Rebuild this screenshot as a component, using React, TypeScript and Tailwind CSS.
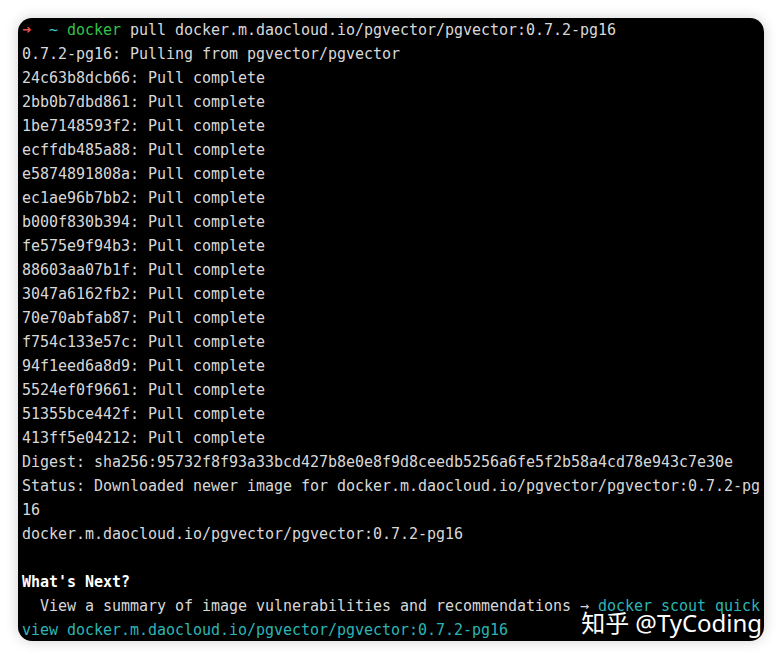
const layers = [
  ['24c63b8dcb66'],
  ['2bb0b7dbd861'],
  ['1be7148593f2'],
  ['ecffdb485a88'],
  ['e5874891808a'],
  ['ec1ae96b7bb2'],
  ['b000f830b394'],
  ['fe575e9f94b3'],
  ['88603aa07b1f'],
  ['3047a6162fb2'],
  ['70e70abfab87'],
  ['f754c133e57c'],
  ['94f1eed6a8d9'],
  ['5524ef0f9661'],
  ['51355bce442f'],
  ['413ff5e04212'],
];

const Line = ({ children, className = '' }: { children?: React.ReactNode; className?: string }) => (
  <div className={`h-6 leading-6 whitespace-pre ${className}`}>{children}</div>
);

export default function App() {
  return (
    <div className="w-[782px] h-[660px] bg-white pt-[18px] pl-[18px]">
      <div className="relative w-[746px] h-[623px] bg-black rounded-[14px] overflow-hidden shadow-[0_0_14px_rgba(0,0,0,0.18)] px-1 font-['DejaVu_Sans_Mono',monospace] text-[15px] tracking-[-0.03px] text-[#d8d8d8]">
        <Line>
          <span className="text-[#e85050]">➜</span>
          {'  '}
          <span className="text-[#3cc8d0]">~</span>{' '}
          <span className="text-[#33c24a]">docker</span>
          {' pull docker.m.daocloud.io/pgvector/pgvector:0.7.2-pg16'}
        </Line>
        <Line>0.7.2-pg16: Pulling from pgvector/pgvector</Line>
        {layers.map(([id]) => (
          <Line key={id}>{id}: Pull complete</Line>
        ))}
        <Line>Digest: sha256:95732f8f93a33bcd427b8e0e8f9d8ceedb5256a6fe5f2b58a4cd78e943c7e30e</Line>
        <Line>Status: Downloaded newer image for docker.m.daocloud.io/pgvector/pgvector:0.7.2-pg</Line>
        <Line>16</Line>
        <Line>docker.m.daocloud.io/pgvector/pgvector:0.7.2-pg16</Line>
        <Line />
        <Line className="font-bold text-white">What's Next?</Line>
        <Line>
          {'  View a summary of image vulnerabilities and recommendations → '}
          <span className="text-[#2cb5b5]">docker scout quick</span>
        </Line>
        <Line className="text-[#2cb5b5]">view docker.m.daocloud.io/pgvector/pgvector:0.7.2-pg16</Line>

        <div className="absolute right-[2px] bottom-[2px] text-white text-[24px] leading-8 font-['Noto_Sans','Noto_Sans_CJK_SC',sans-serif] [text-shadow:0_0_3px_rgba(0,0,0,0.6)]">
          知乎 @TyCoding
        </div>
      </div>
    </div>
  );
}
